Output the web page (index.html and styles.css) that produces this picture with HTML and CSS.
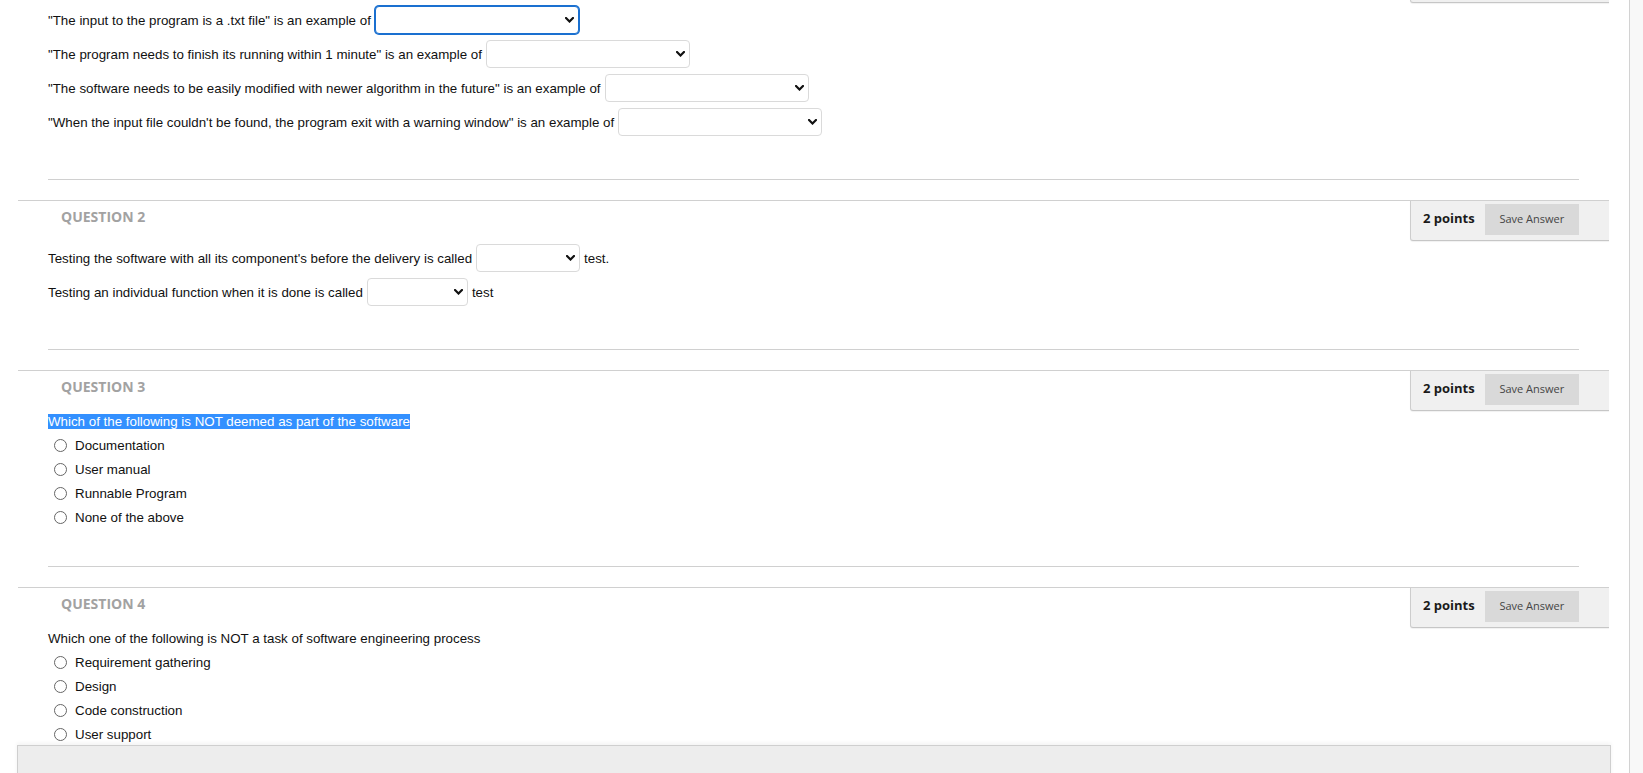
FILE: index.html
```html
<!DOCTYPE html>
<html lang="en">
<head>
<meta charset="utf-8">
<title>Test</title>
<link rel="stylesheet" href="styles.css">
</head>
<body>
<div class="page">
  <main class="main">
    <ol class="questions">
      <li class="question">
        <div class="q-head">
          <span class="q-title"></span>
          <div class="points-box"></div>
        </div>
        <div class="q-body fill">
          <div class="fill-row"><span>"The input to the program is a .txt file" is an example of</span><span class="sel sel-wide sel-focus"><svg class="chev" width="9" height="6" viewBox="0 0 9 6"><path d="M1 1 L4.5 4.5 L8 1"/></svg></span></div>
          <div class="fill-row"><span>"The program needs to finish its running within 1 minute" is an example of</span><span class="sel sel-wide"><svg class="chev" width="9" height="6" viewBox="0 0 9 6"><path d="M1 1 L4.5 4.5 L8 1"/></svg></span></div>
          <div class="fill-row"><span>"The software needs to be easily modified with newer algorithm in the future" is an example of</span><span class="sel sel-wide"><svg class="chev" width="9" height="6" viewBox="0 0 9 6"><path d="M1 1 L4.5 4.5 L8 1"/></svg></span></div>
          <div class="fill-row"><span>"When the input file couldn't be found, the program exit with a warning window" is an example of</span><span class="sel sel-wide"><svg class="chev" width="9" height="6" viewBox="0 0 9 6"><path d="M1 1 L4.5 4.5 L8 1"/></svg></span></div>
        </div>
      </li>
      <li class="question">
        <div class="q-head">
          <span class="q-title">QUESTION 2</span>
          <div class="points-box"><span class="points">2 points</span><span class="save-btn">Save Answer</span></div>
        </div>
        <div class="q-body fill">
          <div class="fill-row"><span>Testing the software with all its component's before the delivery is called</span><span class="sel sel-mid"><svg class="chev" width="9" height="6" viewBox="0 0 9 6"><path d="M1 1 L4.5 4.5 L8 1"/></svg></span><span>test.</span></div>
          <div class="fill-row"><span>Testing an individual function when it is done is called</span><span class="sel sel-small"><svg class="chev" width="9" height="6" viewBox="0 0 9 6"><path d="M1 1 L4.5 4.5 L8 1"/></svg></span><span>test</span></div>
        </div>
      </li>
      <li class="question">
        <div class="q-head">
          <span class="q-title">QUESTION 3</span>
          <div class="points-box"><span class="points">2 points</span><span class="save-btn">Save Answer</span></div>
        </div>
        <div class="q-body mc">
          <div class="q-text"><span class="selected">Which of the following is NOT deemed as part of the software</span></div>
          <div class="opt"><span class="radio"></span><span class="opt-label">Documentation</span></div>
          <div class="opt"><span class="radio"></span><span class="opt-label">User manual</span></div>
          <div class="opt"><span class="radio"></span><span class="opt-label">Runnable Program</span></div>
          <div class="opt"><span class="radio"></span><span class="opt-label">None of the above</span></div>
        </div>
      </li>
      <li class="question">
        <div class="q-head">
          <span class="q-title">QUESTION 4</span>
          <div class="points-box"><span class="points">2 points</span><span class="save-btn">Save Answer</span></div>
        </div>
        <div class="q-body mc">
          <div class="q-text">Which one of the following is NOT a task of software engineering process</div>
          <div class="opt"><span class="radio"></span><span class="opt-label">Requirement gathering</span></div>
          <div class="opt"><span class="radio"></span><span class="opt-label">Design</span></div>
          <div class="opt"><span class="radio"></span><span class="opt-label">Code construction</span></div>
          <div class="opt"><span class="radio"></span><span class="opt-label">User support</span></div>
        </div>
      </li>
    </ol>
  </main>
  <div class="scroll-strip"></div>
</div>
<div class="footer-bar"></div>
</body>
</html>
```
FILE: styles.css
```css
html, body {
  margin: 0;
  padding: 0;
  height: 100%;
  overflow: hidden;
  background: #fff;
}

body {
  font-family: "Liberation Sans", Arial, sans-serif;
  font-size: 13.333px;
  color: #111;
}

.page {
  display: flex;
  height: 773px;
}

.main {
  width: 1630px;
  flex: 0 0 1630px;
  box-sizing: border-box;
  border-right: 1px solid #d2d2d2;
  overflow: hidden;
}

.scroll-strip {
  flex: 1;
  background: #f8f8f8;
}

.questions {
  list-style: none;
  margin: -38px 0 0;
  padding: 0 20px 0 18px;
}

.question {
  border-top: 1px solid #d0d0d0;
  margin-bottom: 20px;
}

.q-head {
  display: flex;
  justify-content: space-between;
  align-items: flex-start;
  height: 40px;
}

.q-title {
  padding-left: 43px;
  font-family: "Open Sans", sans-serif;
  font-weight: 700;
  font-size: 14px;
  line-height: 32px;
  color: #a2a2a2;
}

.points-box {
  display: flex;
  align-items: center;
  box-sizing: border-box;
  width: 199px;
  height: 40px;
  padding: 3px 30px 5px 12px;
  background: #f0f0f0;
  border-left: 1px solid #cdcdcd;
  border-bottom: 1px solid #c6c6c6;
  border-bottom-left-radius: 3px;
  box-shadow: 0 1px 1px rgba(0, 0, 0, 0.06);
}

.points {
  font-family: "Open Sans", sans-serif;
  font-weight: 700;
  font-size: 13px;
  color: #1b1b1b;
  margin-right: 10px;
  margin-bottom: 3px;
  white-space: nowrap;
}

.save-btn {
  display: flex;
  align-items: center;
  justify-content: center;
  box-sizing: border-box;
  width: 95px;
  height: 31px;
  padding-bottom: 2px;
  background: #d9d9d9;
  font-family: "Open Sans", sans-serif;
  font-size: 11px;
  color: #454545;
  white-space: nowrap;
}

.q-body {
  margin: 0 30px;
  border-bottom: 1px solid #d0d0d0;
}

.q-body.fill {
  padding-bottom: 40px;
}

.q-body.mc {
  padding-bottom: 37px;
}

.fill-row {
  display: flex;
  align-items: center;
  gap: 4px;
  height: 34px;
  white-space: nowrap;
}

.sel {
  display: flex;
  align-items: center;
  justify-content: flex-end;
  box-sizing: border-box;
  height: 28px;
  padding-right: 4px;
  background: #fff;
  border: 1px solid #dadada;
  border-radius: 4px;
}

.sel-wide { width: 204px; }
.sel-mid { width: 104px; }
.sel-small { width: 101px; }

.sel-focus {
  border-color: #1a70d0;
  box-shadow: 0 0 0 1px #1a70d0;
}

.chev path {
  fill: none;
  stroke: #111;
  stroke-width: 2.2;
  stroke-linecap: square;
}

.q-text {
  height: 22px;
  line-height: 22px;
}

.selected {
  background: #3390ff;
  color: #fff;
}

.opt {
  display: flex;
  align-items: center;
  height: 24px;
  padding-left: 6px;
}

.radio {
  box-sizing: border-box;
  width: 13px;
  height: 13px;
  border: 1px solid #666;
  border-radius: 50%;
  background: #fff;
}

.opt-label {
  margin-left: 8px;
}

.footer-bar {
  position: fixed;
  left: 17px;
  top: 745px;
  width: 1594px;
  height: 40px;
  box-sizing: border-box;
  background: #ededed;
  border: 1px solid #cfcfcf;
  border-bottom: none;
  box-shadow: 0 -2px 4px rgba(0, 0, 0, 0.05);
}
```
